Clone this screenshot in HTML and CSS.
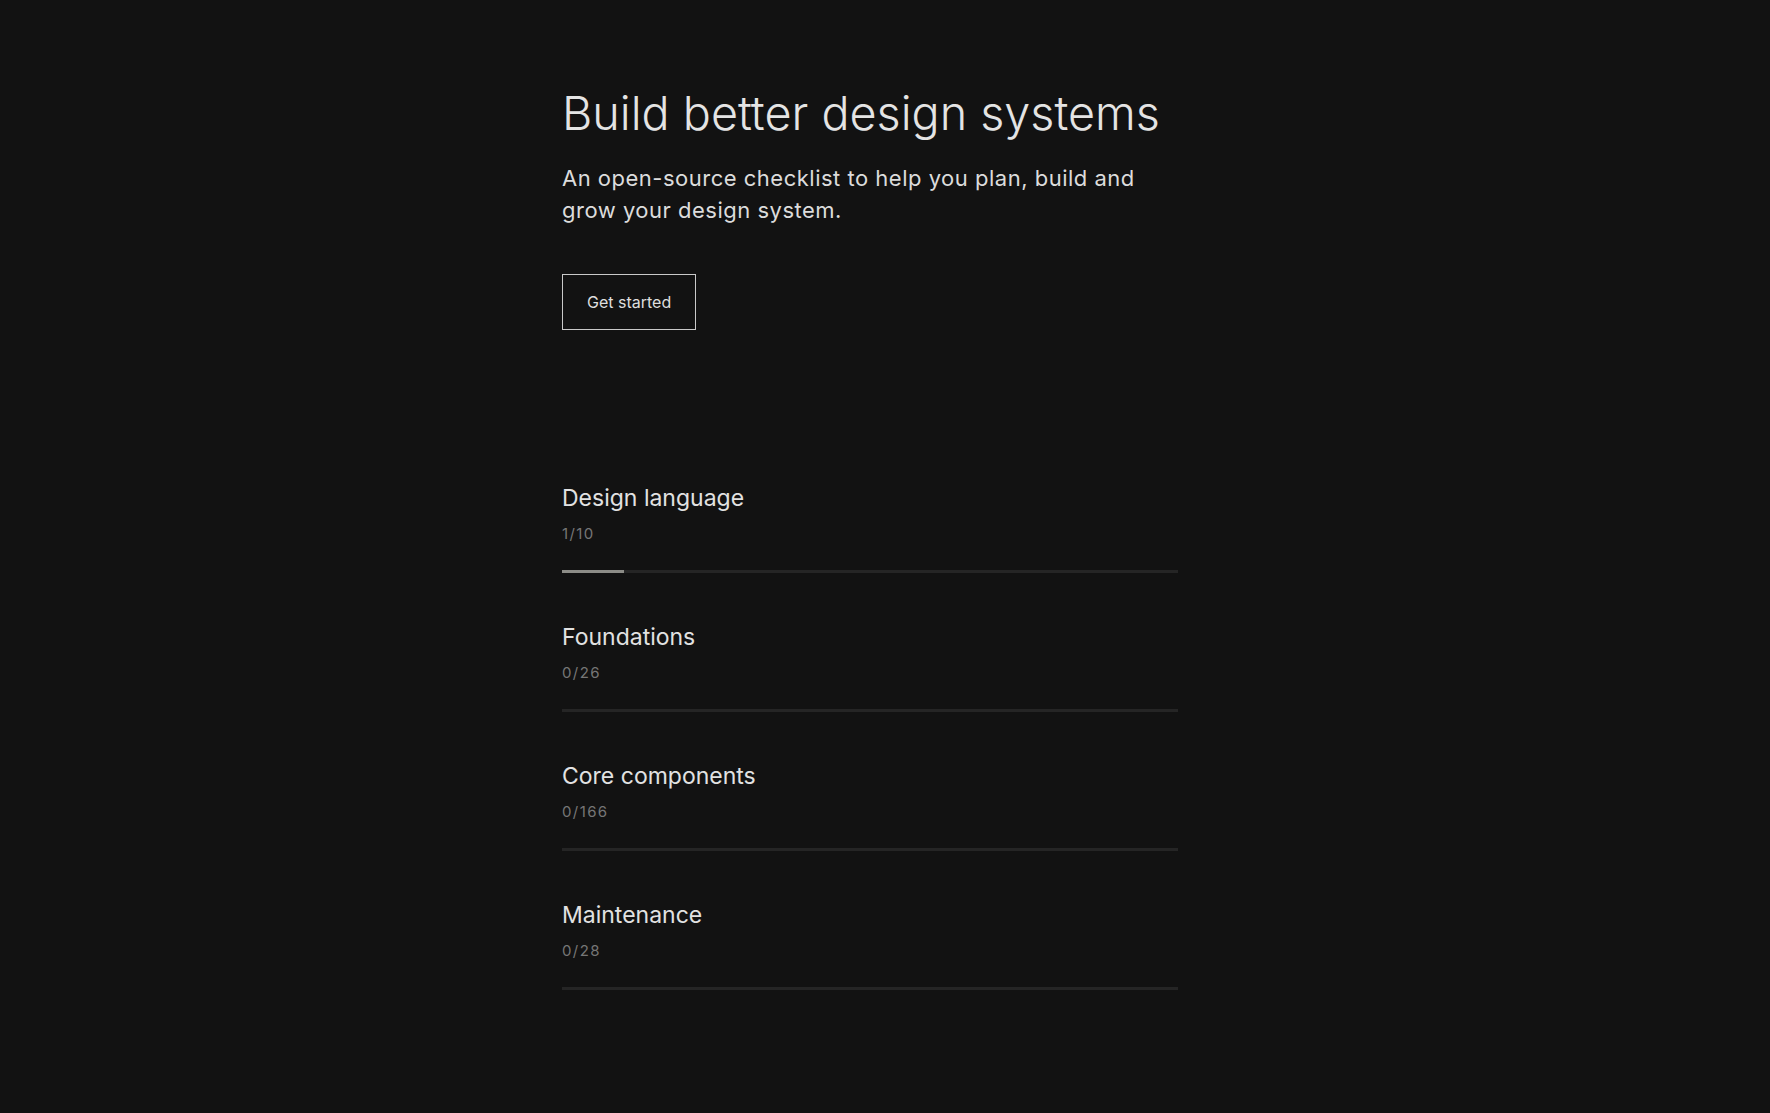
FILE: index.html
```html
<!DOCTYPE html>
<html lang="en">
<head>
<meta charset="utf-8">
<title>Design System Checklist</title>
<link rel="stylesheet" href="styles.css">
</head>
<body>
<main class="page">
  <header class="hero">
    <h1 class="hero-title">Build better design systems</h1>
    <p class="hero-lead">An open-source checklist to help you plan, build and grow your design system.</p>
    <a class="btn" href="#">Get started</a>
  </header>
  <section class="sections">
    <a class="section" href="#">
      <h2 class="section-title">Design language</h2>
      <div class="section-count">1/10</div>
      <div class="progress"><div class="progress-fill" style="width:10%"></div></div>
    </a>
    <a class="section" href="#">
      <h2 class="section-title">Foundations</h2>
      <div class="section-count">0/26</div>
      <div class="progress"><div class="progress-fill" style="width:0%"></div></div>
    </a>
    <a class="section" href="#">
      <h2 class="section-title">Core components</h2>
      <div class="section-count">0/166</div>
      <div class="progress"><div class="progress-fill" style="width:0%"></div></div>
    </a>
    <a class="section" href="#">
      <h2 class="section-title">Maintenance</h2>
      <div class="section-count">0/28</div>
      <div class="progress"><div class="progress-fill" style="width:0%"></div></div>
    </a>
  </section>
</main>
</body>
</html>
```
FILE: styles.css
```css
html, body {
  margin: 0;
  padding: 0;
  background: #121212;
}
body {
  font-family: Inter, "Noto Sans", sans-serif;
  color: #e2e2e2;
  min-height: 1113px;
}
.page {
  width: 616px;
  margin: 0 0 0 562px;
  padding-top: 85px;
}
.hero {
  display: flex;
  flex-direction: column;
  align-items: flex-start;
}
.hero-title {
  margin: 0;
  font-size: 46.7px;
  line-height: 56px;
  font-weight: 300;
  color: #e4e4e4;
  white-space: nowrap;
}
.hero-lead {
  margin: 21px 0 0;
  font-size: 22px;
  line-height: 32px;
  font-weight: 400;
  letter-spacing: 0.5px;
  color: #dcdcdc;
  max-width: 600px;
}
.btn {
  margin-top: 48px;
  display: inline-block;
  border: 1px solid #c9c9c9;
  padding: 15.5px 24px;
  font-size: 16px;
  line-height: 23px;
  color: #dedede;
  text-decoration: none;
}
.sections {
  margin-top: 152px;
  display: flex;
  flex-direction: column;
  gap: 47.9px;
}
.section {
  display: flex;
  flex-direction: column;
  text-decoration: none;
}
.section-title {
  margin: 0;
  font-size: 23px;
  line-height: 32px;
  font-weight: 400;
  color: #e2e2e2;
}
.section-count {
  margin-top: 9px;
  font-size: 15px;
  line-height: 22px;
  letter-spacing: 1.4px;
  color: #767676;
}
.progress {
  margin-top: 25px;
  height: 3px;
  background: #252525;
}
.progress-fill {
  height: 100%;
  background: #8c8c87;
}
```
